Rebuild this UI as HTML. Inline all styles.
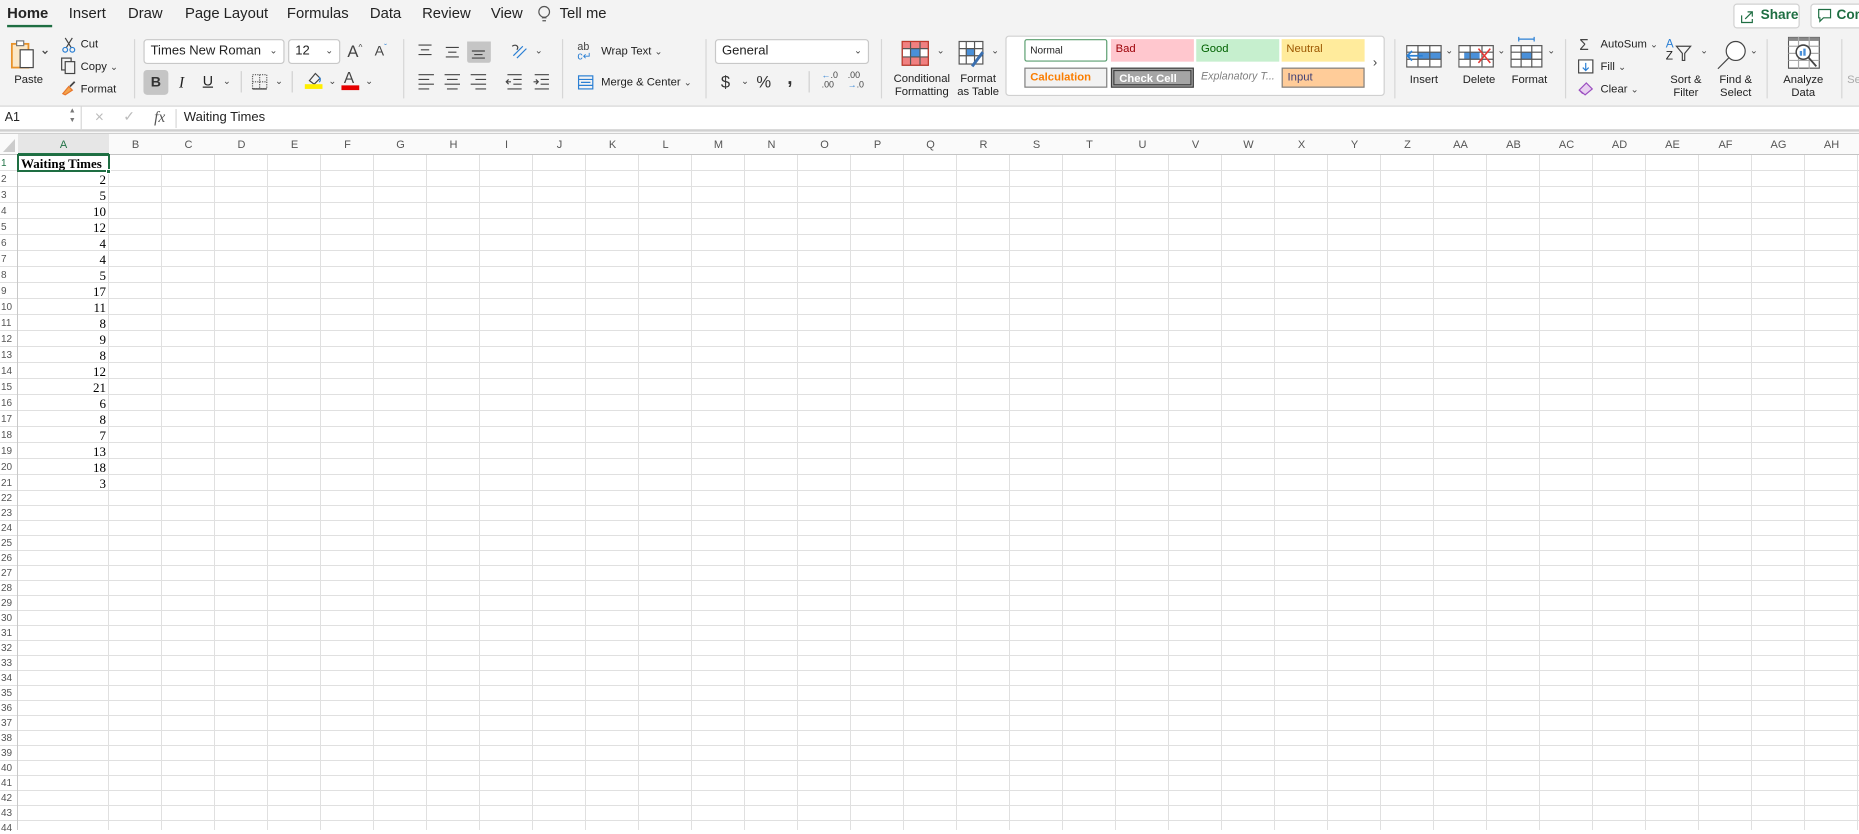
<!DOCTYPE html>
<html><head><meta charset="utf-8">
<style>
*{box-sizing:border-box;margin:0;padding:0}
body{width:1859px;height:830px;overflow:hidden;background:#fff;font-family:"Liberation Sans",sans-serif;position:relative}
#top{position:absolute;left:0;top:0;width:1568px;height:112px;transform:scale(1.18559);transform-origin:0 0;background:#f3f3f3;color:#222}
.a{position:absolute;white-space:nowrap}
.t{font-size:12.5px;top:4px;color:#222}
.s{font-size:9.5px}
.sep{position:absolute;width:1px;background:#d6d6d6;top:33px;height:50px}
.box{position:absolute;background:#fff;border:1px solid #c8c8c8;border-radius:3px;font-size:11px;padding:3px 5px}
.chev{font-size:8px;color:#444}
.lbl{font-size:9.5px;text-align:center;line-height:11px}
.st{position:absolute;height:19px;font-size:9.5px;padding:3px 4px;width:70px;white-space:nowrap;overflow:hidden}
#grid{position:absolute;left:0;top:133px;width:1859px;height:697px}
#hdr{position:absolute;left:0;top:0;width:1859px;height:22px;background:#fafafa;border-top:1px solid #cfcfcf;border-bottom:1px solid #c4c4c4;font-size:11px;color:#555}
#hdr span{position:absolute;top:5px;width:53px;text-align:center}
.vl{position:absolute;top:0;bottom:0;left:109px;right:0;background:repeating-linear-gradient(to right,transparent 0 52px,#e0e0e0 52px 53px)}
.rn{position:absolute;left:1px;font-size:10px;color:#555}
.v{position:absolute;left:18px;width:88px;text-align:right;font-family:"Liberation Serif",serif;font-size:13px}
</style></head><body>
<div id="top">
 <div class="a t" style="left:6px;font-weight:bold">Home</div>
 <div class="a" style="left:6px;top:21px;width:38px;height:2px;background:#1e6e42"></div>
 <div class="a t" style="left:58px">Insert</div>
 <div class="a t" style="left:108px">Draw</div>
 <div class="a t" style="left:156px">Page Layout</div>
 <div class="a t" style="left:242px">Formulas</div>
 <div class="a t" style="left:312px">Data</div>
 <div class="a t" style="left:356px">Review</div>
 <div class="a t" style="left:414px">View</div>
 <svg class="a" style="left:453px;top:4px" width="12" height="16"><circle cx="6" cy="6" r="4.5" fill="none" stroke="#555"/><path d="M4 11h4M4.5 13.5h3" stroke="#555"/></svg>
 <div class="a t" style="left:472px">Tell me</div>
 <div class="a" style="left:1462px;top:3px;width:56px;height:21px;background:#fff;border:1px solid #d0d0d0;border-radius:3px;color:#1e6e42;font-size:11.5px;font-weight:bold;padding:3px 0 0 22px">Share</div>
 <svg class="a" style="left:1468px;top:8px" width="12" height="12"><path d="M1 5v6h9V8M4 8l6-6M6 2h4v4" fill="none" stroke="#1e6e42"/></svg>
 <div class="a" style="left:1527px;top:3px;width:50px;height:21px;background:#fff;border:1px solid #d0d0d0;border-radius:3px;color:#1e6e42;font-size:11.5px;font-weight:bold;padding:3px 0 0 21px">Com</div>
 <svg class="a" style="left:1533px;top:7px" width="12" height="13"><path d="M1 1h10v7H5l-3 3V8H1z" fill="none" stroke="#1e6e42"/></svg>

 <svg class="a" style="left:9px;top:33px" width="36" height="28"><rect x="1" y="4" width="14" height="20" fill="#fbe7c6" stroke="#e8922a" stroke-width="1.5"/><rect x="5" y="1.5" width="6" height="4" fill="#fff" stroke="#777"/><rect x="8" y="9" width="11" height="15" fill="#fff" stroke="#444"/><path d="M27 10l2 2 2-2" fill="none" stroke="#444"/></svg>
 <div class="a s" style="left:12px;top:62px">Paste</div>
 <svg class="a" style="left:52px;top:31px" width="12" height="14"><path d="M3 1l5 8M9 1L4 9" stroke="#444"/><circle cx="3" cy="11" r="2" fill="none" stroke="#2a7fd4"/><circle cx="9" cy="11" r="2" fill="none" stroke="#2a7fd4"/></svg>
 <div class="a s" style="left:68px;top:32px">Cut</div>
 <svg class="a" style="left:51px;top:48px" width="14" height="15"><rect x="1" y="1" width="8" height="10" fill="none" stroke="#444"/><rect x="4" y="4" width="8" height="10" fill="#f3f3f3" stroke="#444"/></svg>
 <div class="a s" style="left:68px;top:51px">Copy <span class="chev">⌄</span></div>
 <svg class="a" style="left:51px;top:67px" width="14" height="14"><path d="M2 12l5-6 3 3-6 4z" fill="#f3a44c" stroke="#e8752a"/><path d="M8 6l4-4" stroke="#444" stroke-width="1.5"/></svg>
 <div class="a s" style="left:68px;top:70px">Format</div>
 <div class="sep" style="left:113px"></div>

 <div class="box" style="left:121px;top:33px;width:119px;height:21px">Times New Roman<span class="chev" style="position:absolute;right:5px;top:4px">⌄</span></div>
 <div class="box" style="left:243px;top:33px;width:44px;height:21px">12<span class="chev" style="position:absolute;right:5px;top:4px">⌄</span></div>
 <div class="a" style="left:293px;top:35px;font-size:14px;color:#444">A<sup style="font-size:7px">^</sup></div>
 <div class="a" style="left:316px;top:36px;font-size:12px;color:#444">A<sup style="font-size:7px;color:#2a7fd4">ˇ</sup></div>
 <div class="a" style="left:121px;top:59px;width:21px;height:21px;background:#c5c5c5;border-radius:3px;font-size:12px;font-weight:bold;text-align:center;padding-top:3px;color:#333">B</div>
 <div class="a" style="left:151px;top:62px;font-family:'Liberation Serif',serif;font-style:italic;font-size:13px">I</div>
 <div class="a" style="left:171px;top:61px;font-size:12px;text-decoration:underline">U</div>
 <div class="a chev" style="left:188px;top:64px">⌄</div>
 <div class="a" style="left:203px;top:60px;width:1px;height:18px;background:#d0d0d0"></div>
 <svg class="a" style="left:212px;top:62px" width="14" height="14"><rect x="1" y="1" width="12" height="12" fill="none" stroke="#555" stroke-dasharray="1 1"/><path d="M7 1v12M1 7h12" stroke="#555" stroke-dasharray="1 1"/><path d="M1 13h12" stroke="#222"/></svg>
 <div class="a chev" style="left:232px;top:64px">⌄</div>
 <div class="a" style="left:246px;top:60px;width:1px;height:18px;background:#d0d0d0"></div>
 <svg class="a" style="left:257px;top:58px" width="16" height="18"><path d="M4 10l5-6 4 4-5 5z" fill="none" stroke="#444"/><path d="M12 7c2 2 1 4 0 4" stroke="#2a7fd4" fill="none"/><rect x="0" y="13" width="15" height="4" fill="#ffee00"/></svg>
 <div class="a chev" style="left:277px;top:64px">⌄</div>
 <div class="a" style="left:290px;top:58px;font-size:13px;color:#444">A</div>
 <div class="a" style="left:288px;top:72px;width:15px;height:4px;background:#e60000"></div>
 <div class="a chev" style="left:308px;top:64px">⌄</div>
 <div class="sep" style="left:340px"></div>

 <svg class="a" style="left:351px;top:35px" width="70" height="18"><path d="M2 3h11M4 7h7M2 11h11" stroke="#444"/><path d="M25 5h11M27 9h7M25 13h11" stroke="#444"/><rect x="43" y="-2" width="20" height="20" rx="2" fill="#c5c5c5"/><path d="M47 8h11M49 11h7M47 14h11" stroke="#444"/></svg>
 <svg class="a" style="left:430px;top:35px" width="20" height="18"><path d="M3 12l8-8M6 14l8-8" stroke="#2a7fd4"/><path d="M2 4c3-2 6 0 4 3" stroke="#444" fill="none"/></svg>
 <div class="a chev" style="left:451px;top:38px">⌄</div>
 <svg class="a" style="left:351px;top:62px" width="115" height="14"><path d="M2 1h13M2 5h9M2 9h13M2 13h9" stroke="#444"/><path d="M24 1h13M26 5h9M24 9h13M26 13h9" stroke="#444"/><path d="M46 1h13M50 5h9M46 9h13M50 13h9" stroke="#444"/><path d="M77 1h12M82 5h7M82 9h7M77 13h12M80 7h-4M78 5l-2 2 2 2" stroke="#444" fill="none"/><path d="M100 1h12M105 5h7M105 9h7M100 13h12M99 7h4M101 5l2 2-2 2" stroke="#444" fill="none"/></svg>
 <div class="sep" style="left:474px"></div>
 <div class="a" style="left:487px;top:35px;font-size:9px;line-height:8px;color:#444">ab<br><span style="color:#2a7fd4">c↵</span></div>
 <div class="a s" style="left:507px;top:38px">Wrap Text <span class="chev">⌄</span></div>
 <svg class="a" style="left:487px;top:63px" width="14" height="13"><rect x="1" y="1" width="12" height="11" fill="none" stroke="#2a7fd4"/><path d="M1 4h12M1 9h12M3 6.5h8" stroke="#2a7fd4"/></svg>
 <div class="a s" style="left:507px;top:64px">Merge &amp; Center <span class="chev">⌄</span></div>
 <div class="sep" style="left:595px"></div>

 <div class="box" style="left:603px;top:33px;width:130px;height:21px">General<span class="chev" style="position:absolute;right:5px;top:4px">⌄</span></div>
 <div class="a" style="left:608px;top:61px;font-size:14px;color:#333">$</div>
 <div class="a chev" style="left:625px;top:64px">⌄</div>
 <div class="a" style="left:638px;top:61px;font-size:14px;color:#333">%</div>
 <div class="a" style="left:664px;top:58px;font-size:16px;font-weight:bold;color:#333">,</div>
 <div class="a" style="left:682px;top:60px;width:1px;height:18px;background:#d0d0d0"></div>
 <div class="a" style="left:693px;top:60px;font-size:7.5px;line-height:8px;color:#444"><span style="color:#2a7fd4">←</span>.0<br>.00</div>
 <div class="a" style="left:715px;top:60px;font-size:7.5px;line-height:8px;color:#444">.00<br><span style="color:#2a7fd4">→</span>.0</div>
 <div class="sep" style="left:743px"></div>

 <svg class="a" style="left:760px;top:34px" width="26" height="22"><rect x="1" y="1" width="22" height="20" fill="#fff" stroke="#555"/><rect x="1" y="1" width="22" height="6" fill="#f08080"/><rect x="1" y="14" width="22" height="7" fill="#f08080"/><rect x="8" y="7" width="8" height="7" fill="#4a90d9"/><path d="M1 7h22M1 14h22M8 1v20M16 1v20" stroke="#555"/><rect x="1" y="1" width="22" height="20" fill="none" stroke="#c0392b"/></svg>
 <div class="a chev" style="left:790px;top:38px">⌄</div>
 <div class="a lbl" style="left:750px;top:61px;width:55px">Conditional<br>Formatting</div>
 <svg class="a" style="left:808px;top:34px" width="24" height="24"><rect x="1" y="1" width="20" height="19" fill="#fff" stroke="#555"/><rect x="7" y="7" width="7" height="6" fill="#4a90d9"/><path d="M1 7h20M1 13h20M7 1v19M14 1v19" stroke="#555"/><path d="M12 22l9-12" stroke="#3a6fb0" stroke-width="2.5"/></svg>
 <div class="a chev" style="left:836px;top:38px">⌄</div>
 <div class="a lbl" style="left:805px;top:61px;width:40px">Format<br>as Table</div>
 <div class="a" style="left:848px;top:30px;width:320px;height:51px;background:#fff;border:1px solid #d0d0d0;border-radius:3px"></div>
 <div class="st" style="left:864px;top:33px;background:#fff;border:1px solid #5a9e6f;border-radius:2px;font-size:8.5px">Normal</div>
 <div class="st" style="left:937px;top:33px;background:#ffc7ce;color:#9c0006">Bad</div>
 <div class="st" style="left:1009px;top:33px;background:#c6efce;color:#006100">Good</div>
 <div class="st" style="left:1081px;top:33px;background:#ffeb9c;color:#9c5700">Neutral</div>
 <div class="st" style="left:864px;top:57px;height:17px;padding-top:2px;background:#f2f2f2;color:#fa7d00;border:1px solid #7f7f7f;font-weight:bold">Calculation</div>
 <div class="st" style="left:937px;top:57px;height:17px;padding-top:1px;background:#a5a5a5;color:#fff;border:3px double #3f3f3f;font-weight:bold">Check Cell</div>
 <div class="st" style="left:1009px;top:57px;height:17px;padding-top:2px;color:#7f7f7f;font-style:italic;font-size:9px">Explanatory T...</div>
 <div class="st" style="left:1081px;top:57px;height:17px;padding-top:2px;background:#ffcc99;color:#3f3f76;border:1px solid #7f7f7f">Input</div>
 <div class="a" style="left:1158px;top:47px;font-size:11px;color:#444">›</div>
 <div class="sep" style="left:1176px"></div>

 <svg class="a" style="left:1186px;top:36px" width="100" height="22"><g stroke="#555" fill="#fff"><rect x="0.5" y="2.5" width="29" height="18"/></g><rect x="10" y="8" width="19" height="6" fill="#4a90d9"/><path d="M0.5 8h29M0.5 14h29M10 2v18M20 2v18" stroke="#555"/><path d="M14 11H1M5 7l-4 4 4 4" stroke="#2a7fd4" fill="none" stroke-width="1.5"/></svg>
 <div class="a chev" style="left:1219px;top:38px">⌄</div>
 <svg class="a" style="left:1230px;top:36px" width="32" height="22"><rect x="0.5" y="2.5" width="29" height="18" fill="#fff" stroke="#555"/><rect x="5" y="8" width="13" height="6" fill="#4a90d9"/><path d="M0.5 8h29M0.5 14h29M10 2v18M20 2v18" stroke="#555"/><path d="M17 5l10 12M27 5L17 17" stroke="#e53935" stroke-width="1.3"/></svg>
 <div class="a chev" style="left:1263px;top:38px">⌄</div>
 <svg class="a" style="left:1274px;top:31px" width="28" height="28"><path d="M7 2h13M7 0v4M20 0v4" stroke="#2a7fd4"/><rect x="0.5" y="7.5" width="26" height="18" fill="#fff" stroke="#555"/><rect x="9" y="13" width="9" height="6" fill="#4a90d9"/><path d="M0.5 13h26M0.5 19h26M9 7v19M18 7v19" stroke="#555"/></svg>
 <div class="a chev" style="left:1305px;top:38px">⌄</div>
 <div class="a lbl" style="left:1186px;top:62px;width:30px">Insert</div>
 <div class="a lbl" style="left:1230px;top:62px;width:35px">Delete</div>
 <div class="a lbl" style="left:1271px;top:62px;width:38px">Format</div>
 <div class="sep" style="left:1320px"></div>

 <div class="a" style="left:1332px;top:30px;font-size:13px;color:#444">Σ</div>
 <div class="a s" style="left:1350px;top:32px">AutoSum <span class="chev">⌄</span></div>
 <svg class="a" style="left:1331px;top:50px" width="14" height="13"><rect x="0.5" y="0.5" width="12" height="11" fill="#fff" stroke="#444"/><path d="M6.5 3v6M4 7l2.5 2.5L9 7" stroke="#2a7fd4" fill="none"/></svg>
 <div class="a s" style="left:1350px;top:51px">Fill <span class="chev">⌄</span></div>
 <svg class="a" style="left:1331px;top:68px" width="14" height="13"><path d="M1 8l6-6 5 5-6 5z" fill="#e8d0f0" stroke="#9b4fc0"/><path d="M1 8l3 3" stroke="#9b4fc0"/></svg>
 <div class="a s" style="left:1350px;top:70px">Clear <span class="chev">⌄</span></div>
 <div class="a" style="left:1405px;top:33px;font-size:10px;line-height:10px"><span style="color:#2a7fd4">A</span><br>Z</div>
 <svg class="a" style="left:1413px;top:38px" width="14" height="14"><path d="M1 1h12L8 7v6H6V7z" fill="none" stroke="#444"/></svg>
 <div class="a chev" style="left:1434px;top:38px">⌄</div>
 <div class="a lbl" style="left:1402px;top:62px;width:40px">Sort &amp;<br>Filter</div>
 <svg class="a" style="left:1446px;top:33px" width="30" height="26"><circle cx="18" cy="10" r="8" fill="#fff" stroke="#444"/><path d="M12 16L3 25" stroke="#444"/></svg>
 <div class="a chev" style="left:1476px;top:38px">⌄</div>
 <div class="a lbl" style="left:1444px;top:62px;width:40px">Find &amp;<br>Select</div>
 <div class="sep" style="left:1490px"></div>
 <svg class="a" style="left:1508px;top:31px" width="28" height="28"><rect x="0.5" y="0.5" width="26" height="26" fill="#fff" stroke="#555"/><rect x="0.5" y="0.5" width="26" height="3" fill="#888"/><path d="M0.5 8h26M0.5 14h26M0.5 20h26M9 0v27M18 0v27" stroke="#aaa"/><circle cx="13" cy="13" r="6" fill="#fff" stroke="#444" stroke-width="1.3"/><rect x="10" y="12" width="2" height="4" fill="#4a90d9"/><rect x="13" y="10" width="2" height="6" fill="#4a90d9"/><path d="M17 17l7 8" stroke="#444" stroke-width="1.5"/></svg>
 <div class="a lbl" style="left:1500px;top:62px;width:42px">Analyze<br>Data</div>
 <div class="sep" style="left:1553px"></div>
 <div class="a lbl" style="left:1558px;top:62px;color:#aaa">Se</div>

 <div class="a" style="left:0;top:89px;width:1568px;height:22px;background:#fff;border-top:1px solid #d6d6d6;border-bottom:2px solid #d0d0d0"></div>
 <div class="a" style="left:4px;top:93px;font-size:10.5px">A1</div>
 <div class="a" style="left:58px;top:90px;font-size:6px;line-height:8px;color:#777">▲<br>▼</div>
 <div class="a" style="left:68px;top:89px;width:1px;height:21px;background:#d6d6d6"></div>
 <div class="a" style="left:80px;top:91px;font-size:13px;color:#bbb">×</div>
 <div class="a" style="left:104px;top:91px;font-size:12px;color:#bbb">✓</div>
 <div class="a" style="left:130px;top:91px;font-size:13px;font-family:'Liberation Serif',serif;font-style:italic;color:#555">fx</div>
 <div class="a" style="left:148px;top:92px;width:1px;height:16px;background:#d6d6d6"></div>
 <div class="a" style="left:155px;top:93px;font-size:11px">Waiting Times</div>
</div>

<div id="grid">
 <div style="position:absolute;left:0;top:22px;right:0;height:336px;background:repeating-linear-gradient(to bottom,transparent 0 15px,#e0e0e0 15px 16px)"></div>
 <div style="position:absolute;left:0;top:358px;right:0;bottom:0;background:repeating-linear-gradient(to bottom,transparent 0 14px,#e0e0e0 14px 15px)"></div>
 <div class="vl"></div>
 <div style="position:absolute;left:17px;top:0;bottom:0;width:1px;background:#c8c8c8"></div>
 <div style="position:absolute;left:108px;top:0;bottom:0;width:1px;background:#e0e0e0"></div>
 <div id="hdr">
  <svg style="position:absolute;left:2px;top:3px" width="14" height="16"><path d="M13 2v13H1z" fill="#ccc"/></svg>
  <div style="position:absolute;left:18px;width:91px;top:0;height:21px;background:#e6e6e6;border-bottom:2px solid #217346"></div>
  <span style="left:18px;width:91px;color:#217346">A</span>
  <span style="left:109px">B</span><span style="left:162px">C</span><span style="left:215px">D</span><span style="left:268px">E</span><span style="left:321px">F</span><span style="left:374px">G</span><span style="left:427px">H</span><span style="left:480px">I</span><span style="left:533px">J</span><span style="left:586px">K</span><span style="left:639px">L</span><span style="left:692px">M</span><span style="left:745px">N</span><span style="left:798px">O</span><span style="left:851px">P</span><span style="left:904px">Q</span><span style="left:957px">R</span><span style="left:1010px">S</span><span style="left:1063px">T</span><span style="left:1116px">U</span><span style="left:1169px">V</span><span style="left:1222px">W</span><span style="left:1275px">X</span><span style="left:1328px">Y</span><span style="left:1381px">Z</span><span style="left:1434px">AA</span><span style="left:1487px">AB</span><span style="left:1540px">AC</span><span style="left:1593px">AD</span><span style="left:1646px">AE</span><span style="left:1699px">AF</span><span style="left:1752px">AG</span><span style="left:1805px">AH</span>
 </div>
 <div class="rn" style="top:25px;color:#217346">1</div><div class="rn" style="top:41px">2</div><div class="rn" style="top:57px">3</div><div class="rn" style="top:73px">4</div><div class="rn" style="top:89px">5</div><div class="rn" style="top:105px">6</div><div class="rn" style="top:121px">7</div><div class="rn" style="top:137px">8</div><div class="rn" style="top:153px">9</div><div class="rn" style="top:169px">10</div><div class="rn" style="top:185px">11</div><div class="rn" style="top:201px">12</div><div class="rn" style="top:217px">13</div><div class="rn" style="top:233px">14</div><div class="rn" style="top:249px">15</div><div class="rn" style="top:265px">16</div><div class="rn" style="top:281px">17</div><div class="rn" style="top:297px">18</div><div class="rn" style="top:313px">19</div><div class="rn" style="top:329px">20</div><div class="rn" style="top:345px">21</div>
 <div class="rn" style="top:360px">22</div><div class="rn" style="top:375px">23</div><div class="rn" style="top:390px">24</div><div class="rn" style="top:405px">25</div><div class="rn" style="top:420px">26</div><div class="rn" style="top:435px">27</div><div class="rn" style="top:450px">28</div><div class="rn" style="top:465px">29</div><div class="rn" style="top:480px">30</div><div class="rn" style="top:495px">31</div><div class="rn" style="top:510px">32</div><div class="rn" style="top:525px">33</div><div class="rn" style="top:540px">34</div><div class="rn" style="top:555px">35</div><div class="rn" style="top:570px">36</div><div class="rn" style="top:585px">37</div><div class="rn" style="top:600px">38</div><div class="rn" style="top:615px">39</div><div class="rn" style="top:630px">40</div><div class="rn" style="top:645px">41</div><div class="rn" style="top:660px">42</div><div class="rn" style="top:675px">43</div><div class="rn" style="top:690px">44</div>
 <div style="position:absolute;left:21px;top:23px;font-family:'Liberation Serif',serif;font-weight:bold;font-size:13px">Waiting Times</div>
 <div class="v" style="top:39px">2</div><div class="v" style="top:55px">5</div><div class="v" style="top:71px">10</div><div class="v" style="top:87px">12</div><div class="v" style="top:103px">4</div><div class="v" style="top:119px">4</div><div class="v" style="top:135px">5</div><div class="v" style="top:151px">17</div><div class="v" style="top:167px">11</div><div class="v" style="top:183px">8</div><div class="v" style="top:199px">9</div><div class="v" style="top:215px">8</div><div class="v" style="top:231px">12</div><div class="v" style="top:247px">21</div><div class="v" style="top:263px">6</div><div class="v" style="top:279px">8</div><div class="v" style="top:295px">7</div><div class="v" style="top:311px">13</div><div class="v" style="top:327px">18</div><div class="v" style="top:343px">3</div>
 <div style="position:absolute;left:17px;top:21px;width:93px;height:18px;border:2px solid #1e6e42"></div>
 <div style="position:absolute;left:106px;top:36px;width:5px;height:5px;background:#1e6e42;border:1px solid #fff"></div>
</div>
</body></html>
